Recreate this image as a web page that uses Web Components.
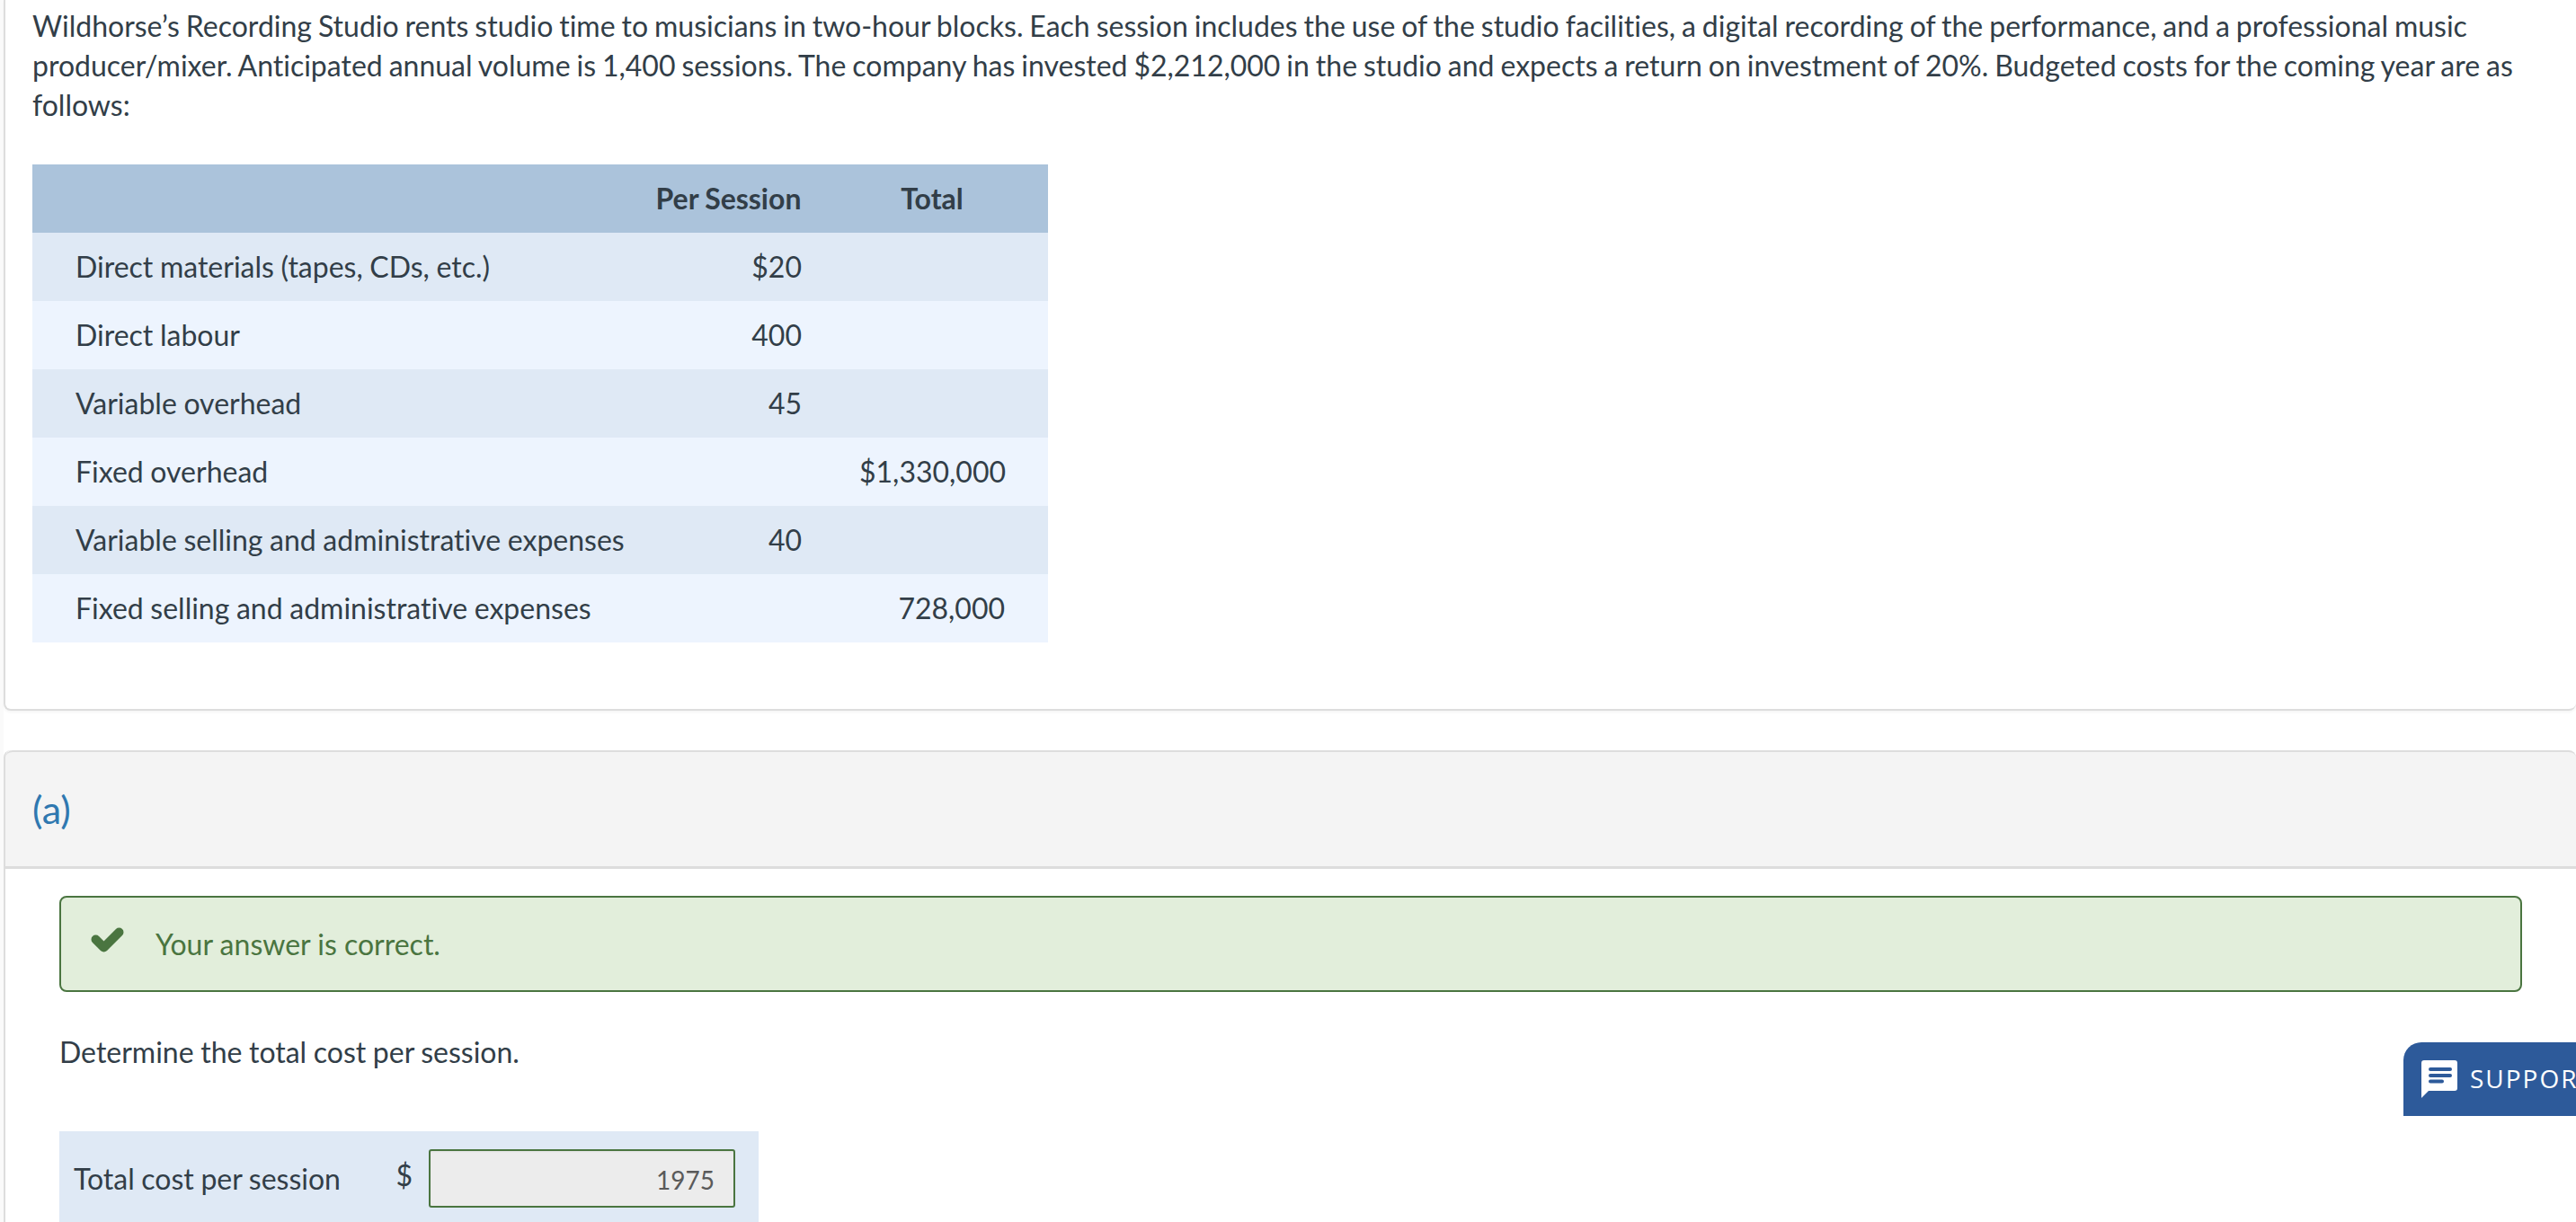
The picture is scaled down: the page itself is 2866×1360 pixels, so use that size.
<!DOCTYPE html>
<html lang="en">
<head>
<meta charset="utf-8">
<title>Wildhorse's Recording Studio</title>
<style>
  html, body { margin: 0; height: 100%; overflow: hidden; background: #fff; }
  body { font: 32px/44px Lato, "Liberation Sans", sans-serif; color: #323e48; font-variant-ligatures: none; word-spacing: -0.6px; }
</style>
</head>
<body>
<quiz-page>
  <problem-card>
    Wildhorse’s Recording Studio rents studio time to musicians in two-hour blocks. Each session includes the use of the studio facilities, a digital recording of the performance, and a professional music producer/mixer. Anticipated annual volume is 1,400 sessions. The company has invested $2,212,000 in the studio and expects a return on investment of 20%. Budgeted costs for the coming year are as follows:
    <cost-table slot="table">
      <cost-row head><span slot="per">Per Session</span><span slot="total">Total</span></cost-row>
      <cost-row>Direct materials (tapes, CDs, etc.)<span slot="per">$20</span></cost-row>
      <cost-row>Direct labour<span slot="per">400</span></cost-row>
      <cost-row>Variable overhead<span slot="per">45</span></cost-row>
      <cost-row>Fixed overhead<span slot="total">$1,330,000</span></cost-row>
      <cost-row>Variable selling and administrative expenses<span slot="per">40</span></cost-row>
      <cost-row>Fixed selling and administrative expenses<span slot="total">728,000</span></cost-row>
    </cost-table>
  </problem-card>
  <part-section label="(a)">
    <answer-banner>Your answer is correct.</answer-banner>
    <p-line>Determine the total cost per session.</p-line>
    <answer-row label="Total cost per session" value="1975"></answer-row>
  </part-section>
</quiz-page>
<support-tab>SUPPORT</support-tab>

<script>
class QuizPage extends HTMLElement {
  constructor(){
    super();
    this.attachShadow({mode:'open'}).innerHTML = `
      <style>:host{display:block; border-left:4px solid #fafafa;}</style>
      <slot></slot>`;
  }
}
class ProblemCard extends HTMLElement {
  constructor(){
    super();
    this.attachShadow({mode:'open'}).innerHTML = `
      <style>
        :host{display:block; box-sizing:border-box; height:791px; padding:7px 30px 0;
              background:#fff; border:solid #ddd; border-width:0 0 2px 2px;
              border-radius:0 0 8px 8px; box-shadow:0 2px 3px rgba(0,0,0,.04);}
        .text{word-spacing:-1.25px;}
        .table{margin-top:44px;}
      </style>
      <div class="text"><slot></slot></div>
      <div class="table"><slot name="table"></slot></div>`;
  }
}
class CostTable extends HTMLElement {
  constructor(){
    super();
    this.attachShadow({mode:'open'}).innerHTML = `
      <style>:host{display:block; width:1130px;}</style>
      <slot></slot>`;
  }
}
class CostRow extends HTMLElement {
  constructor(){
    super();
    this.attachShadow({mode:'open'}).innerHTML = `
      <style>
        :host{display:grid; grid-template-columns:1fr 163px 162px; column-gap:64px;
              align-items:center; height:76px; padding:0 48px; background:#dfe9f5;}
        :host(:nth-child(odd)){background:#edf4fe;}
        :host([head]){background:#abc3db; font-weight:700;}
        .label{white-space:nowrap; min-width:0;}
        .num{text-align:right; white-space:nowrap;}
        :host([head]) .num{text-align:center;}
      </style>
      <div class="label"><slot></slot></div>
      <div class="num"><slot name="per"></slot></div>
      <div class="num"><slot name="total"></slot></div>`;
  }
}
class PartSection extends HTMLElement {
  constructor(){
    super();
    const root = this.attachShadow({mode:'open'});
    root.innerHTML = `
      <style>
        :host{display:block; margin-top:44px; border-left:2px solid #ddd; border-radius:8px 8px 0 0;}
        header{box-sizing:border-box; height:132px; display:flex; align-items:center; padding:0 30px;
               background:#f4f4f4; border-top:2px solid #ddd; border-bottom:3px solid #ddd;
               border-radius:8px 8px 0 0; color:#2f78b0; font-size:43px;}
        .body{padding:30px 60px 0 60px;}
      </style>
      <header></header>
      <div class="body"><slot></slot></div>`;
    root.querySelector('header').textContent = this.getAttribute('label') || '';
  }
}
class AnswerBanner extends HTMLElement {
  constructor(){
    super();
    this.attachShadow({mode:'open'}).innerHTML = `
      <style>
        :host{display:flex; align-items:center; box-sizing:border-box; height:107px; padding:0 0 0 33px;
              background:#e2eedb; border:2px solid #4a7540; border-radius:8px; color:#4a7540; word-spacing:0;}
        svg{width:37px; height:28px; margin:-9px 35px 0 0; flex:none;}
        span{margin-top:1px;}
      </style>
      <svg viewBox="0 0 37 28"><path d="M5.500 13.500l9 9 17-17" fill="none" stroke="#4a7540" stroke-width="10" stroke-linecap="round" stroke-linejoin="round"/></svg>
      <span><slot></slot></span>`;
  }
}
class PLine extends HTMLElement {
  constructor(){
    super();
    this.attachShadow({mode:'open'}).innerHTML = `
      <style>:host{display:block; margin:45px 0 66px;}</style>
      <slot></slot>`;
  }
}
class AnswerRow extends HTMLElement {
  constructor(){
    super();
    const root = this.attachShadow({mode:'open'});
    root.innerHTML = `
      <style>
        :host{display:flex; align-items:center; box-sizing:border-box; width:778px; padding:20px 26px 20px 16px; background:#dfe9f5;}
        .label{flex:1;}
        .cur{margin:-8px 18px 0 0;}
        .input{box-sizing:border-box; width:341px; height:65px; padding:2px 21px 0 0; display:flex; align-items:center; justify-content:flex-end;
               background:#ececec; border:2px solid #4a7540; border-radius:3px; color:#5a5a5a; font-size:28px;
               box-shadow:inset 0 1px 2px rgba(0,0,0,.05);}
      </style>
      <span class="label"></span><span class="cur">$</span><span class="input"></span>`;
    root.querySelector('.label').textContent = this.getAttribute('label');
    root.querySelector('.input').textContent = this.getAttribute('value');
  }
}
class SupportTab extends HTMLElement {
  constructor(){
    super();
    this.attachShadow({mode:'open'}).innerHTML = `
      <style>
        :host{position:fixed; left:2674px; top:1160px; width:192px; height:82px; box-sizing:border-box; overflow:hidden;
              display:flex; align-items:flex-start; padding:20px 0 0 20px; background:#2d5a9a; color:#fff; white-space:nowrap;
              border-radius:20px 0 0 0; font:28px/40px "Open Sans", sans-serif; letter-spacing:2px; word-spacing:0;}
        svg{width:40px; height:42px; margin-right:14px; flex:none;}
      </style>
      <svg viewBox="0 0 40 42"><path fill="#fff" d="M3 0h34a3 3 0 0 1 3 3v28a3 3 0 0 1-3 3H8l-8 8V3a3 3 0 0 1 3-3z"/><path fill="#2d5a9a" d="M10 8h22a2 2 0 0 1 0 4H10a2 2 0 0 1 0-4zm0 7h22a2 2 0 0 1 0 4H10a2 2 0 0 1 0-4zm0 6.500h13a2 2 0 0 1 0 4H10a2 2 0 0 1 0-4z"/></svg>
      <span><slot></slot></span>`;
  }
}
customElements.define('quiz-page', QuizPage);
customElements.define('problem-card', ProblemCard);
customElements.define('cost-table', CostTable);
customElements.define('cost-row', CostRow);
customElements.define('part-section', PartSection);
customElements.define('answer-banner', AnswerBanner);
customElements.define('p-line', PLine);
customElements.define('answer-row', AnswerRow);
customElements.define('support-tab', SupportTab);
</script>
</body>
</html>
